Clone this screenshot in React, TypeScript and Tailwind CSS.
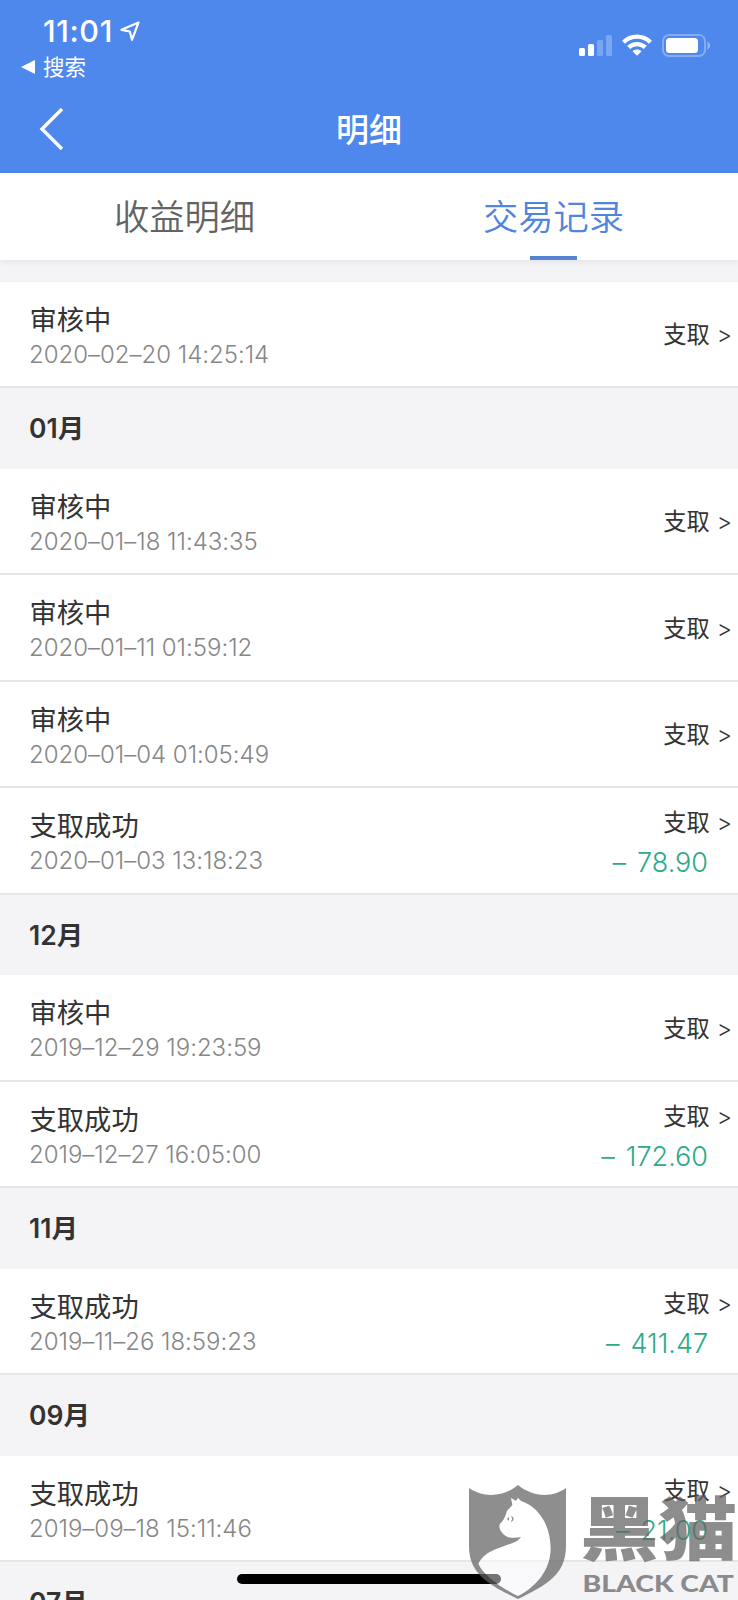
const CJK = 'font-["Inter","Noto_Sans_CJK_SC",sans-serif]';

type Entry = { status: string; time: string; amount?: string };
type Group = { month?: string; entries: Entry[] };

const groups: Group[] = [
    { entries: [{ status: "审核中", time: "2020–02–20 14:25:14" }] },
    {
        month: "01月",
        entries: [
            { status: "审核中", time: "2020–01–18 11:43:35" },
            { status: "审核中", time: "2020–01–11 01:59:12" },
            { status: "审核中", time: "2020–01–04 01:05:49" },
            { status: "支取成功", time: "2020–01–03 13:18:23", amount: "78.90" },
        ],
    },
    {
        month: "12月",
        entries: [
            { status: "审核中", time: "2019–12–29 19:23:59" },
            { status: "支取成功", time: "2019–12–27 16:05:00", amount: "172.60" },
        ],
    },
    { month: "11月", entries: [{ status: "支取成功", time: "2019–11–26 18:59:23", amount: "411.47" }] },
    { month: "09月", entries: [{ status: "支取成功", time: "2019–09–18 15:11:46", amount: "21.00" }] },
    { month: "07月", entries: [] },
];

const SHIELD = "M0 4 C16 15 36 12 49 1 C62 12 82 15 97 4 V62 C97 90 78 101 49 115 C20 101 0 90 0 62 Z";
const CAT =
    "M42 14 L47 17 L49 14 L52 17 C70 23 82 42 81.500 66 C81 86 67 103 49 112 C31 103 15 92 9.500 80 C15 66 36 63 47 57.500 C50 56 52 53 52 53 C46 54 40 54.500 37 52 C33 50 29 44 31 40 C34 37 36 34 38 27 L43.500 21 Z";

function StatusBar() {
    return (
        <div className="flex h-[86px] justify-between">
            <div className="pl-[21px] pt-[14px]">
                <div className="flex h-[34px] items-center pl-[22px]">
                    <span className="text-[30.5px] font-medium leading-[34px] tracking-[0.6px]">11:01</span>
                    <svg className="ml-[7px]" width="21" height="21" viewBox="0 0 21 21" fill="none" stroke="currentColor" strokeWidth="2.200" strokeLinejoin="round">
                        <path d="M18.500 1.500 L1.500 8.800 L9.800 10.500 L12 18.800 Z" />
                    </svg>
                </div>
                <div className="flex h-[38px] items-center">
                    <svg width="14" height="14" viewBox="0 0 14 14" fill="currentColor">
                        <path d="M0 7 L14 0 V14 Z" />
                    </svg>
                    <span className="ml-[8px] text-[21.5px] leading-[38px]">搜索</span>
                </div>
            </div>
            <div className="flex items-start pr-[26px] pt-[34px]">
                <svg width="34" height="22" viewBox="0 0 34 22" fill="currentColor">
                    <rect x="0" y="14" width="6" height="8" rx="1.500" />
                    <rect x="9" y="10" width="6" height="12" rx="1.500" />
                    <rect x="18" y="6" width="6" height="16" rx="1.500" opacity=".25" />
                    <rect x="27" y="1" width="6" height="21" rx="1.500" opacity=".25" />
                </svg>
                <svg className="ml-[9px]" width="30" height="22" viewBox="0 0 30 22" fill="none" stroke="currentColor" strokeWidth="4.300">
                    <path d="M1.500 8.300 C9 .7 21 .7 28.500 8.300" />
                    <path d="M6.700 13.400 C11.400 8.900 18.600 8.900 23.300 13.400" />
                    <path d="M15 21.800 L10.500 17.300 C13 15 17 15 19.500 17.300 Z" fill="currentColor" stroke="none" />
                </svg>
                <svg className="ml-[10px]" width="50" height="24" viewBox="0 0 50 24">
                    <rect x="1" y="1" width="42" height="21" rx="6" fill="none" stroke="#fff" strokeOpacity=".3" strokeWidth="2" />
                    <rect x="4" y="4" width="32" height="15" rx="3.500" fill="#fff" />
                    <path d="M45.500 7.500 C49 9 49 14 45.500 15.500 Z" fill="#fff" opacity=".4" />
                </svg>
            </div>
        </div>
    );
}

function Header() {
    return (
        <header className="h-[173px] bg-[#4f88ec] text-white">
            <StatusBar />
            <div className="grid h-[87px] grid-cols-3 items-center">
                <svg className="ml-[39px]" width="26" height="44" viewBox="0 0 26 44" fill="none" stroke="currentColor" strokeWidth="3.400">
                    <path d="M23 1 L3 21 L23 41" />
                </svg>
                <h1 className="pt-px text-center text-[33px] font-medium leading-[87px]">明细</h1>
            </div>
        </header>
    );
}

function Tabs() {
    return (
        <nav className="grid h-[87px] grid-cols-2 bg-white text-center text-[35.3px] font-[350] leading-[89px] text-[#636363] shadow-[0_2px_6px_rgba(0,0,0,0.07)]">
            <span>收益明细</span>
            <span className="flex flex-col items-center text-[#4f85dc]">
                <span className="h-[83px]">交易记录</span>
                <span className="h-[4px] w-[47px] bg-[#5583cf]" />
            </span>
        </nav>
    );
}

function Row({ status, time, amount }: Entry) {
    return (
        <div className="flex h-[106.5px] justify-between border-b-2 border-[#e5e6e8] bg-white pl-[29px]">
            <div className="pt-[21px]">
                <div className="pl-[0.5px] text-[27.3px] leading-[36px] text-[#333]">{status}</div>
                <div className="text-[24px] font-light leading-[32px] tracking-[-0.02px] text-[#868686]">{time}</div>
            </div>
            <div className={amount ? "flex flex-col items-end pt-[18px]" : "flex items-center pt-[3px]"}>
                <div className="flex items-center pr-[6px] text-[23.3px] leading-[34px] text-[#333]">
                    支取<span className="ml-[7px] font-light">&gt;</span>
                </div>
                {amount && (
                    <div className="flex gap-[11px] pr-[30px] pt-[4px] text-[27px] font-light leading-[38px] text-[#2bab85]">
                        <span>–</span>
                        <span>{amount}</span>
                    </div>
                )}
            </div>
        </div>
    );
}

function Watermark() {
    return (
        <div className="absolute bottom-0 right-0 flex h-[116px] w-[269px] text-[#646263]">
            <svg className="shrink-0" width="98" height="116" viewBox="0 0 98 116">
                <path d={SHIELD + CAT} fill="currentColor" fillRule="evenodd" opacity=".72" />
                <path d={CAT} fill="#fff" opacity=".45" />
                <path d="M38 35 L40 33 V37 Z M42 32 C46 33 45 38 41 38 C44 36 43 34 42 32 Z" fill="currentColor" opacity=".75" />
            </svg>
            <div className="ml-[13px] opacity-72">
                <div className="h-[88px] origin-top-left scale-x-[1.05] scale-y-[0.93] whitespace-nowrap pt-[5px] text-[75px] font-black leading-[88px]">
                    黑猫
                </div>
                <div className='origin-left scale-x-[1.285] whitespace-nowrap pl-[2px] font-["Lato",sans-serif] text-[22px] font-black leading-[24px]'>
                    BLACK CAT
                </div>
            </div>
        </div>
    );
}

export default function App() {
    return (
        <div className={`relative h-[1600px] w-[738px] overflow-hidden bg-[#f4f4f7] ${CJK}`}>
            <Header />
            <Tabs />
            <main className="pt-[21.5px]">
                {groups.map((group, i) => (
                    <section key={i}>
                        {group.month && (
                            <h2 className="h-[80.6px] pl-[29px] text-[26.5px] font-semibold leading-[80px] text-[#333]">{group.month}</h2>
                        )}
                        {group.entries.map((entry) => (
                            <Row key={entry.time} {...entry} />
                        ))}
                    </section>
                ))}
            </main>
            <div className="absolute left-[237px] top-[1574px] h-[10px] w-[264px] rounded-full bg-black" />
            <Watermark />
        </div>
    );
}
